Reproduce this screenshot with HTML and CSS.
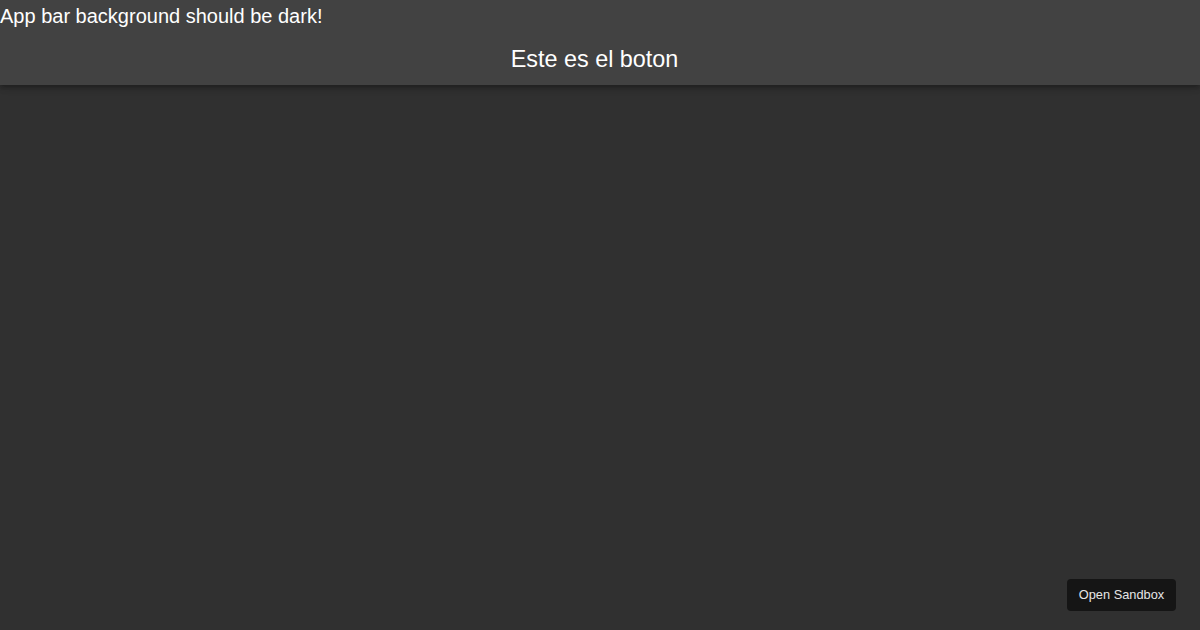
FILE: index.html
```html
<!DOCTYPE html>
<html>
<head>
<meta charset="utf-8">
<link rel="stylesheet" href="styles.css">
</head>
<body>
<header class="appbar">
  <div class="note">App bar background should be dark!</div>
  <div class="toolbar">
    <span class="btn-text">Este es el boton</span>
  </div>
</header>
<main class="content"></main>
<button class="sandbox">Open Sandbox</button>
</body>
</html>
```
FILE: styles.css
```css
html, body {
  margin: 0;
  padding: 0;
  height: 100%;
}
body {
  background: #303030;
  font-family: "Liberation Sans", Arial, sans-serif;
  color: #fff;
  overflow: hidden;
}
.appbar {
  background: #424242;
  box-shadow: 0 2px 4px -1px rgba(0,0,0,0.2), 0 4px 5px 0 rgba(0,0,0,0.14), 0 1px 10px 0 rgba(0,0,0,0.12);
  position: relative;
  z-index: 1;
}
.note {
  font-size: 20px;
  line-height: 32px;
  height: 32px;
}
.toolbar {
  height: 53px;
  display: flex;
  align-items: center;
  justify-content: center;
  padding-right: 11px;
}
.btn-text {
  font-size: 23.4px;
  line-height: 28px;
}
.sandbox {
  position: fixed;
  right: 24px;
  bottom: 19px;
  width: 109px;
  height: 32px;
  padding: 0 0 1px;
  background: #151515;
  color: #e6e6e6;
  border: none;
  border-radius: 4px;
  font-family: "Liberation Sans", Arial, sans-serif;
  font-size: 12.8px;
}
```
